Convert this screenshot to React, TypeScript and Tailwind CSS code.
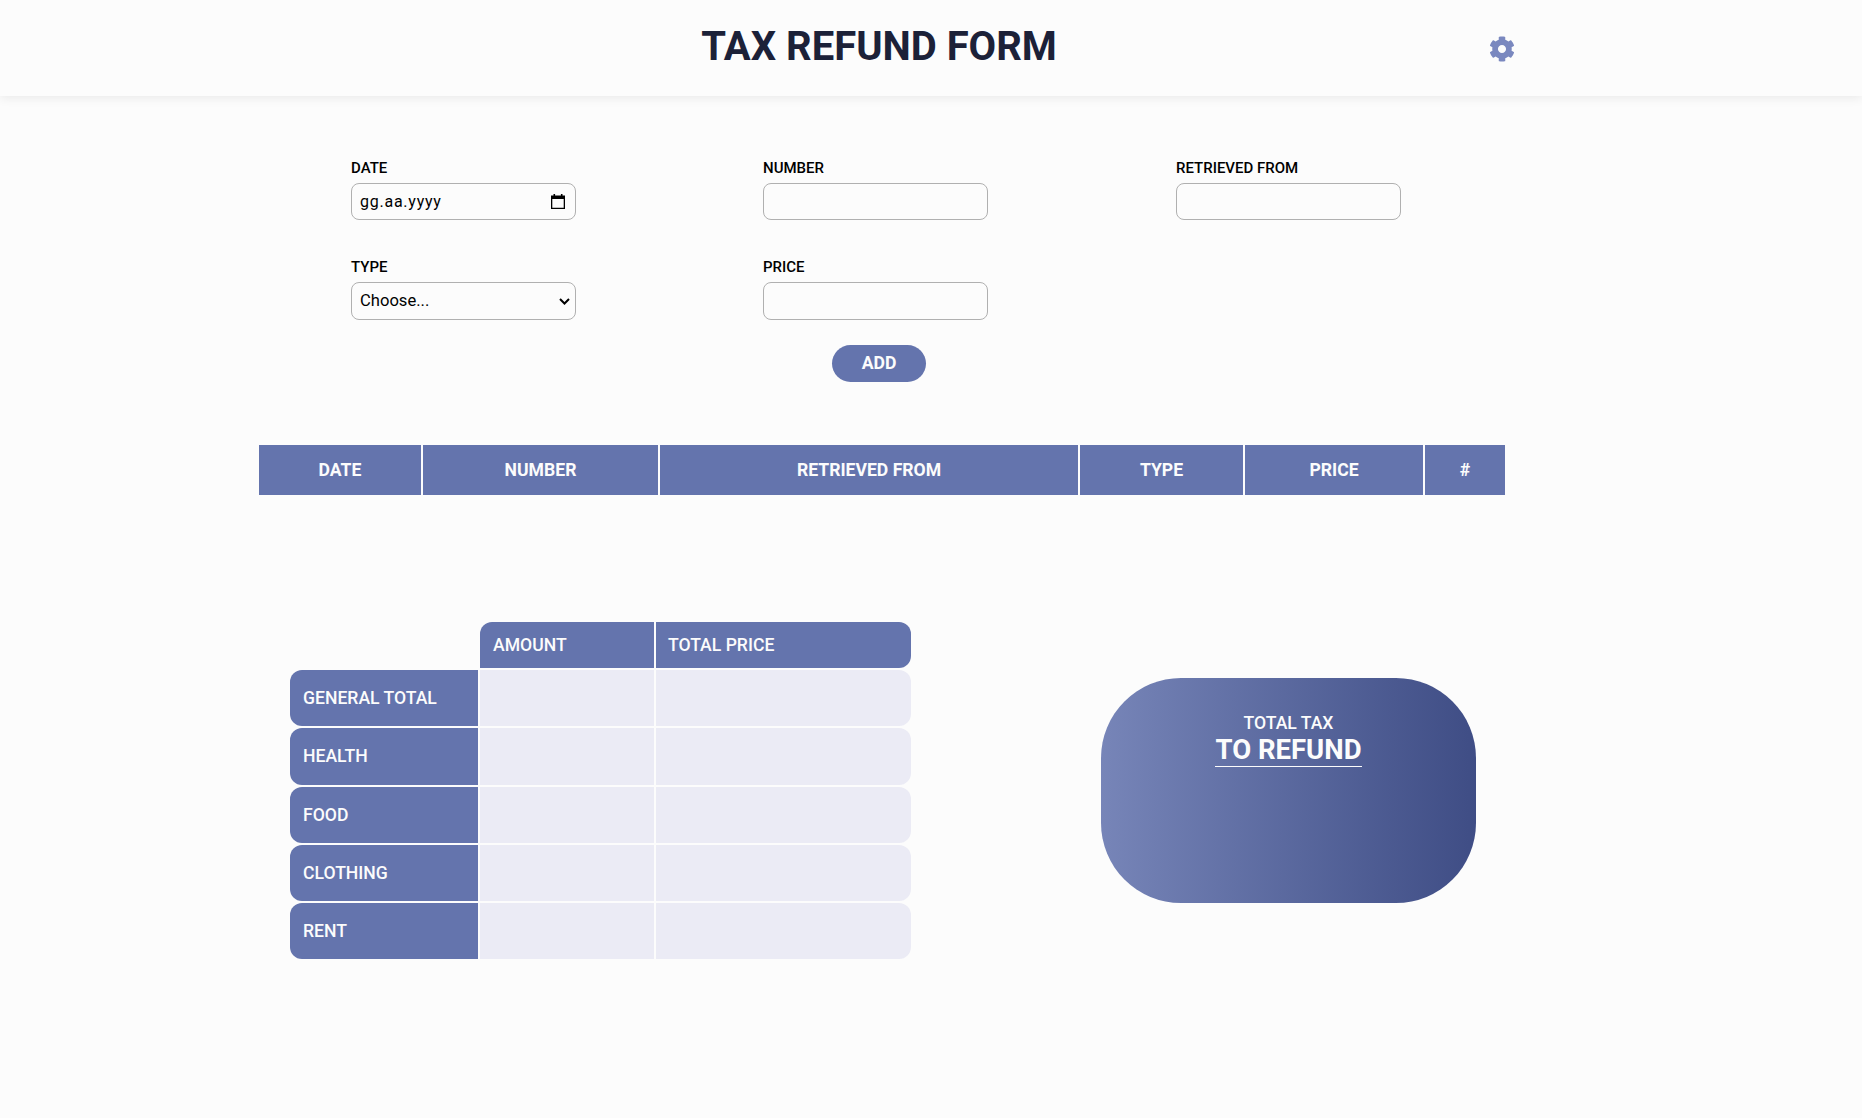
import { FaCog } from "react-icons/fa";

const headers = ["DATE", "NUMBER", "RETRIEVED FROM", "TYPE", "PRICE", "#"];
const rows = ["GENERAL TOTAL", "HEALTH", "FOOD", "CLOTHING", "RENT"];

function Field({ label, children }: { label: string; children: React.ReactNode }) {
  return (
    <div className="flex w-[225px] flex-col">
      <label className="mb-[6px] h-[18px] text-[15px] leading-[18px] font-medium text-black">{label}</label>
      {children}
    </div>
  );
}

const inputClass =
  "w-[225px] rounded-lg border border-[#b0b0b0] bg-[#fcfcfc] px-2 text-base text-black outline-none";

export default function App() {
  return (
    <div className="min-h-[1118px] bg-[#fcfcfc] font-['Roboto',sans-serif]">
      {/* Header */}
      <header className="relative h-24 bg-[#fcfcfc] shadow-[0_2px_10px_rgba(0,0,0,0.08)]">
        <div className="flex h-[94px] w-[1758px] items-center justify-center">
          <h1 className="text-[40px] font-bold text-[#1c2138]">TAX REFUND FORM</h1>
        </div>
        <FaCog className="absolute top-[36px] left-[1489px] text-[#7a88bf]" size={26} />
      </header>

      {/* Form */}
      <div className="ml-[351px] grid w-[1050px] grid-cols-[412px_413px_225px] gap-y-[38px] pt-[63px]">
        <Field label="DATE">
          <div className={`${inputClass} flex h-[37px] items-center justify-between`}>
            <span className="text-base tracking-[0.75px]">gg.aa.yyyy</span>
            <svg width="14" height="15" viewBox="0 0 14 15" className="mr-[2px]">
              <path
                d="M2.5 0h1.6v1.6h5.8V0h1.6v1.6H14V15H0V1.6h2.5V0zM1.3 5v8.7h11.4V5H1.3z"
                fill="#000"
                fillRule="evenodd"
              />
            </svg>
          </div>
        </Field>
        <Field label="NUMBER">
          <input className={`${inputClass} h-[37px]`} />
        </Field>
        <Field label="RETRIEVED FROM">
          <input className={`${inputClass} h-[37px]`} />
        </Field>
        <Field label="TYPE">
          <div className="relative h-[38px] w-[225px]">
            <select className={`${inputClass} h-[38px] appearance-none text-[16.6px]`}>
              <option>Choose...</option>
            </select>
            <svg
              width="11"
              height="7"
              viewBox="0 0 11 7"
              className="pointer-events-none absolute top-[16px] left-[208px]"
            >
              <path d="M1 1l4.5 4.5L10 1" fill="none" stroke="#000" strokeWidth="2" />
            </svg>
          </div>
        </Field>
        <Field label="PRICE">
          <input className={`${inputClass} h-[38px]`} />
        </Field>
      </div>

      <div className="mt-[25px] ml-[832px]">
        <button className="h-[37px] w-[94px] rounded-full bg-[#6474ad] text-[17.6px] font-bold text-[#fcfcfc]">
          ADD
        </button>
      </div>

      {/* Entries table */}
      <div className="mt-[63px] ml-[259px] grid h-[50px] w-[1246px] grid-cols-[162px_235px_418px_163px_178px_80px] gap-x-[2px] gap-y-0">
        {headers.map((h) => (
          <div key={h} className="flex items-center justify-center bg-[#6474ad] text-[17.6px] font-bold text-[#fcfcfc]">
            {h}
          </div>
        ))}
      </div>

      {/* Summary */}
      <div className="mt-[127px] ml-[290px] flex items-start">
        <div className="grid w-[621px] grid-cols-[188px_174px_255px] gap-[2px] text-[17.6px] font-medium text-[#fcfcfc]">
          <div />
          <div className="flex h-[46px] items-center rounded-tl-xl bg-[#6474ad] px-[13px]">AMOUNT</div>
          <div className="flex h-[46px] items-center rounded-tr-xl rounded-br-xl bg-[#6474ad] px-[12px]">TOTAL PRICE</div>
          {rows.map((r) => (
            <div key={r} className="contents">
              <div className="flex h-[56.3px] items-center rounded-l-xl bg-[#6474ad] px-[13px]">{r}</div>
              <div className="bg-[#ebebf5]" />
              <div className="rounded-r-xl bg-[#ebebf5]" />
            </div>
          ))}
        </div>

        <div className="mt-[56px] ml-[190px] flex h-[225px] w-[375px] flex-col items-center rounded-[80px] bg-gradient-to-r from-[#7785b8] to-[#3f4d85] pt-[34px] text-[#fcfcfc]">
          <div className="text-[17.6px] leading-[22px] font-medium">TOTAL TAX</div>
          <div className="border-b border-[#fcfcfc] text-[27.5px] leading-[32px] font-bold">TO REFUND</div>
        </div>
      </div>
    </div>
  );
}
